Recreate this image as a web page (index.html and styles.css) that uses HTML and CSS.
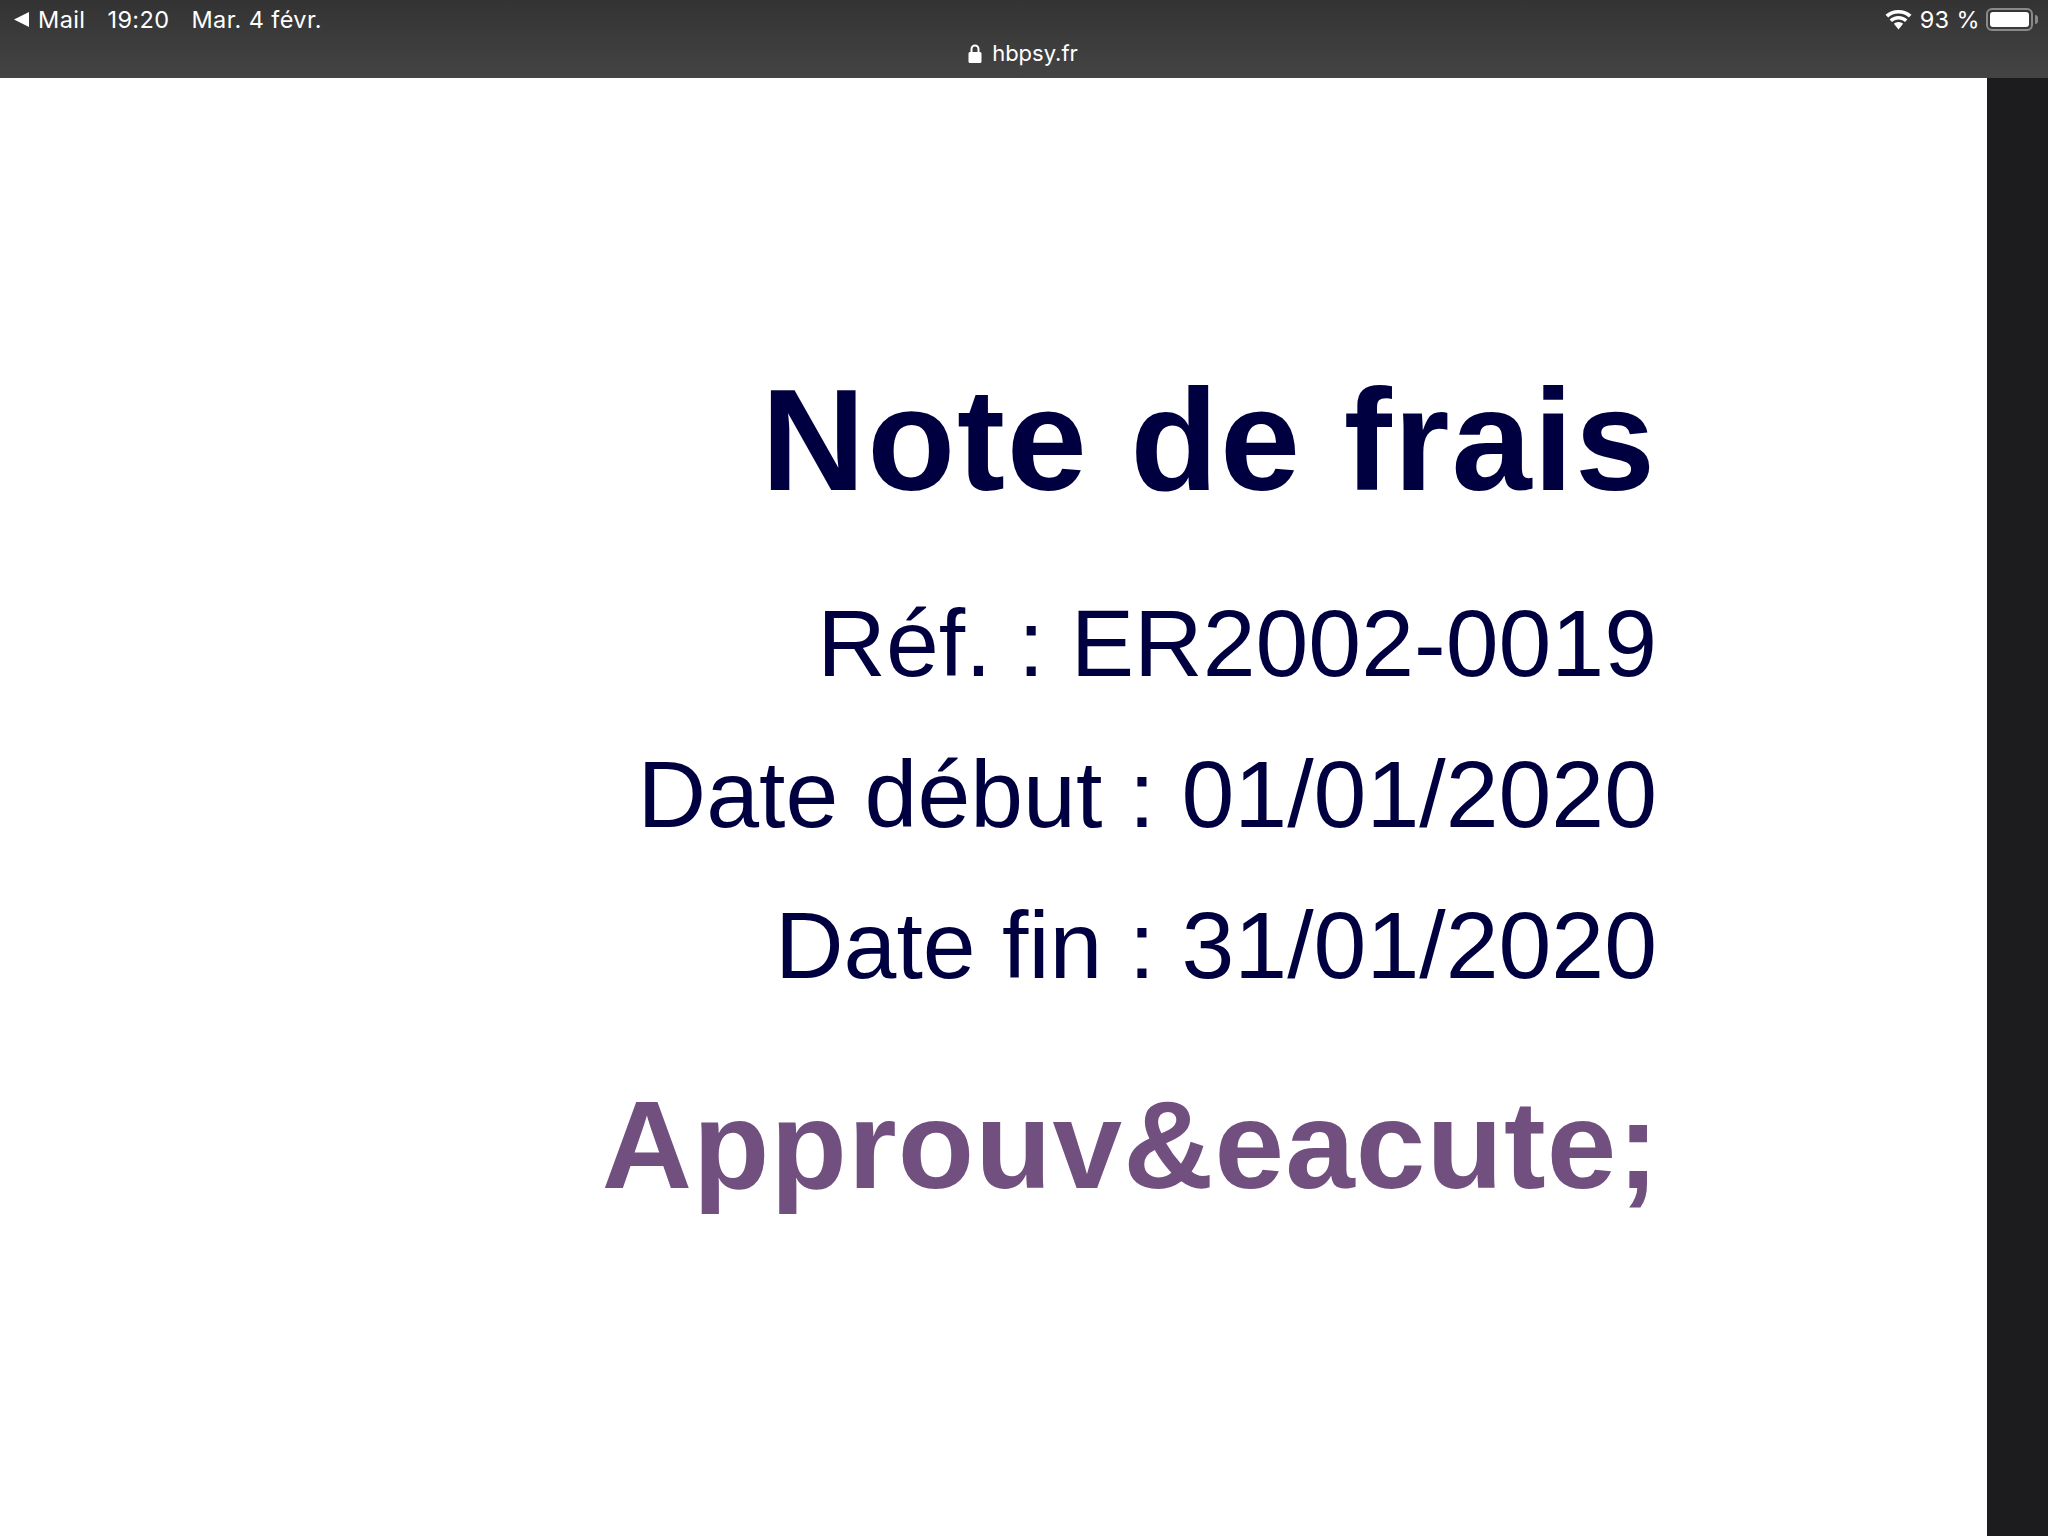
FILE: index.html
```html
<!DOCTYPE html>
<html lang="fr">
<head>
<meta charset="utf-8">
<title>Note de frais</title>
<link rel="stylesheet" href="styles.css">
</head>
<body>
<header class="statusbar">
  <div class="status-row">
    <div class="status-left">
      <span class="back-group">
        <svg class="back-arrow" viewBox="0 0 15 15"><path d="M0 7.500 15 0V15Z"/></svg>
        <span>Mail</span>
      </span>
      <span>19:20</span>
      <span>Mar. 4 févr.</span>
    </div>
    <div class="status-right">
      <svg class="wifi" viewBox="1 0 26 20"><path d="M14 3.500c4.400 0 7.600 1.600 10.300 4l2.700-2.700C23.600 1.800 19 0 14 0S4.400 1.800 1 4.800l2.700 2.700c2.700-2.400 5.900-4 10.300-4Z"/><path d="M14 9.500c2.700 0 4.800 1 6.500 2.500l2.400-2.500C20.500 7.400 17.400 6 14 6S7.500 7.400 5.100 9.500L7.500 12c1.700-1.500 3.800-2.500 6.500-2.500Z"/><path d="M14 12c-1.900 0-3.400.7-4.600 1.800L14 19.500l4.600-5.700C17.400 12.700 15.900 12 14 12Z"/></svg>
      <span class="pct">93 %</span>
      <span class="battery"><span class="battery-fill"></span></span>
      <span class="battery-cap"></span>
    </div>
  </div>
  <div class="url-row">
    <svg class="lock" viewBox="0 0 14 19"><path d="M3.500 9V5a3.500 3.500 0 0 1 7 0v4" fill="none" stroke="#fff" stroke-width="2"/><rect x="0.500" y="8" width="13" height="11" rx="1.500"/></svg>
    <span>hbpsy.fr</span>
  </div>
</header>
<div class="screen">
  <main class="page">
    <h1 class="title">Note de frais</h1>
    <p class="line">Réf. : ER2002-0019</p>
    <p class="line">Date début : 01/01/2020</p>
    <p class="line">Date fin : 31/01/2020</p>
    <p class="state">Approuv&amp;eacute;</p>
  </main>
  <aside class="gutter"></aside>
</div>
</body>
</html>
```

FILE: styles.css
```css
* { box-sizing: border-box; }
html, body { margin: 0; height: 100%; }
body {
  width: 2048px;
  height: 1536px;
  overflow: hidden;
  display: flex;
  flex-direction: column;
  font-family: "Liberation Sans", Arial, sans-serif;
  background: #1c1c1e;
}
.statusbar {
  height: 78px;
  flex: none;
  padding: 0 10px 0 14px;
  color: #fff;
  font-family: "Inter", "Liberation Sans", sans-serif;
  font-size: 23.500px;
  letter-spacing: 0.400px;
  background: linear-gradient(#333333, #444444);
}
.status-row {
  height: 39px;
  display: flex;
  justify-content: space-between;
  align-items: center;
}
.status-left { display: flex; gap: 22px; align-items: center; }
.back-group { display: flex; gap: 9px; align-items: center; }
.back-arrow { width: 15px; height: 15px; fill: #fff; }
.status-right { display: flex; align-items: center; }
.wifi { width: 27px; height: 20px; fill: #fff; margin-right: 8px; }
.pct { margin-right: 6px; }
.battery {
  width: 47px;
  height: 23px;
  border: 2px solid #8a8a8a;
  border-radius: 6px;
  padding: 2px;
  display: flex;
}
.battery-fill { flex: 1; background: #fff; border-radius: 3px; }
.battery-cap {
  width: 3px;
  height: 9px;
  margin-left: 2px;
  background: #8a8a8a;
  border-radius: 0 3px 3px 0;
}
.url-row {
  height: 28px;
  padding-right: 6px;
  display: flex;
  justify-content: center;
  align-items: center;
  gap: 10px;
  font-size: 22px;
  letter-spacing: 0;
}
.lock { width: 14px; height: 19px; fill: #fff; }
.screen { flex: 1; display: flex; }
.page {
  flex: 1;
  background: #fff;
  padding: 280px 330px 0 0;
  text-align: right;
}
.gutter { width: 61px; background: #1c1c1e; }
.title {
  margin: 0 0 64px;
  font-size: 144px;
  line-height: 166px;
  font-weight: 700;
  letter-spacing: 1.800px;
  color: #000040;
}
.line {
  margin: 0 0 41px;
  font-size: 95px;
  line-height: 110px;
  color: #000040;
}
.state {
  margin: 76px -3px 0 0;
  font-size: 125px;
  line-height: 138px;
  font-weight: 700;
  letter-spacing: 1.100px;
  color: #71507f;
}
```
